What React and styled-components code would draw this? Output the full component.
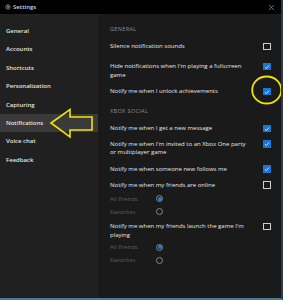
import React from 'react';
import styled, { createGlobalStyle } from 'styled-components';
import { Settings, X } from 'lucide-react';

const GlobalStyle = createGlobalStyle`
  html, body { margin: 0; padding: 0; background: #1a1a1a; }
  body { font-family: "Open Sans", "Noto Sans", sans-serif; -webkit-font-smoothing: antialiased; }
`;

const Window = styled.div`
  position: relative;
  width: 283px;
  height: 300px;
  box-sizing: border-box;
  display: flex;
  flex-direction: column;
  background: #1a1a1a;
  border-right: 2px solid #213d54;
  border-bottom: 2px solid #4d7891;
  overflow: hidden;
`;

const TitleBar = styled.div`
  height: 14px;
  flex: none;
  background: #000;
  display: flex;
  align-items: center;
  padding: 0 5px 0 5px;
  color: #d8d8d8;
  font-size: 6px;
  font-weight: 600;
  gap: 2px;
`;

const TitleText = styled.span`
  flex: 1;
  line-height: 14px;
`;

const Body = styled.div`
  flex: 1;
  display: flex;
  min-height: 0;
`;

const Sidebar = styled.nav`
  width: 98px;
  flex: none;
  background: #202020;
  padding-top: 8px;
  box-sizing: border-box;
`;

const NavItem = styled.div`
  height: 18.4px;
  line-height: 18.4px;
  padding-left: 6px;
  font-size: 6px;
  font-weight: 600;
  color: #e2e2e2;
  background: ${p => (p.$active ? '#3a3a3a' : 'transparent')};
`;

const Content = styled.main`
  flex: 1;
  padding: 11.25px 10px 0 12px;
  box-sizing: border-box;
`;

const SectionHeader = styled.div`
  font-size: 5.6px;
  letter-spacing: 0.3px;
  line-height: 8.5px;
  color: #8c8c8c;
  margin-bottom: 8.5px;
  margin-top: ${p => p.$mt || 0}px;
`;

const Row = styled.div`
  display: flex;
  justify-content: space-between;
  align-items: flex-start;
  margin-bottom: ${p => (p.$mb != null ? p.$mb : 7.5)}px;
`;

const Label = styled.div`
  width: 142px;
  font-size: 6px;
  line-height: 8.5px;
  color: #e6e6e6;
`;

const Box = styled.div`
  width: 7.5px;
  height: 7.5px;
  box-sizing: border-box;
  margin-top: 0.5px;
  margin-right: 0.5px;
  border: ${p => (p.$checked ? 'none' : '1px solid #cfcfcf')};
  background: ${p => (p.$checked ? '#1877d6' : 'transparent')};
  display: flex;
  align-items: center;
  justify-content: center;
`;

const RadioRow = styled.div`
  display: flex;
  align-items: center;
  height: 8.5px;
  margin-bottom: ${p => p.$mb || 4.5}px;
`;

const RadioLabel = styled.div`
  width: 46px;
  font-size: 6px;
  color: #5e5e5e;
`;

const Radio = styled.div`
  width: 7px;
  height: 7px;
  box-sizing: border-box;
  border-radius: 50%;
  border: 1px solid ${p => (p.$on ? '#8a8a8a' : '#8a8a8a')};
  display: flex;
  align-items: center;
  justify-content: center;
  &::after {
    content: '';
    width: 4px;
    height: 4px;
    border-radius: 50%;
    background: ${p => (p.$on ? '#1a7fe0' : 'transparent')};
  }
`;

const Overlay = styled.svg`
  position: absolute;
  left: 0;
  top: 0;
  pointer-events: none;
`;

const Check = ({ checked }) => (
  <Box $checked={checked}>
    {checked && (
      <svg width="6" height="6" viewBox="0 0 6 6">
        <path d="M1 3.2 L2.4 4.5 L5 1.6" fill="none" stroke="#fff" strokeWidth="0.8" />
      </svg>
    )}
  </Box>
);

const Setting = ({ text, checked, mb }) => (
  <Row $mb={mb}>
    <Label>{text}</Label>
    <Check checked={checked} />
  </Row>
);

const RadioItem = ({ text, on, mb }) => (
  <RadioRow $mb={mb}>
    <RadioLabel>{text}</RadioLabel>
    <Radio $on={on} />
  </RadioRow>
);

const navItems = ['General', 'Accounts', 'Shortcuts', 'Personalization', 'Capturing', 'Notifications', 'Voice chat', 'Feedback'];

export default function App() {
  return (
    <>
      <GlobalStyle />
      <Window>
        <TitleBar>
          <Settings size={6} color="#9a9a9a" strokeWidth={3} />
          <TitleText>Settings</TitleText>
          <X size={9} color="#bdbdbd" strokeWidth={1.5} />
        </TitleBar>
        <Body>
          <Sidebar>
            {navItems.map(n => (
              <NavItem key={n} $active={n === 'Notifications'}>{n}</NavItem>
            ))}
          </Sidebar>
          <Content>
            <SectionHeader>GENERAL</SectionHeader>
            <Setting text="Silence notification sounds" mb={11.5} />
            <Setting text="Hide notifications when I'm playing a fullscreen game" checked mb={8} />
            <Setting text="Notify me when I unlock achievements" checked mb={11.5} />
            <SectionHeader>XBOX SOCIAL</SectionHeader>
            <Setting text="Notify me when I get a new message" checked mb={7} />
            <Setting text="Notify me when I'm invited to an Xbox One party or multiplayer game" checked mb={8} />
            <Setting text="Notify me when someone new follows me" checked />
            <Setting text="Notify me when my friends are online" mb={5} />
            <RadioItem text="All friends" on />
            <RadioItem text="Favorites" mb={6.5} />
            <Setting text="Notify me when my friends launch the game I'm playing" mb={3.5} />
            <RadioItem text="All friends" on />
            <RadioItem text="Favorites" />
          </Content>
        </Body>
        <Overlay width="283" height="300" viewBox="0 0 283 300">
          <ellipse cx="266.7" cy="90" rx="14.5" ry="13.5" fill="none" stroke="#f0e500" strokeWidth="1.8" />
          <polygon
            points="51,123 70,109.5 70,117 92,117 92,130 70,130 70,137"
            fill="none"
            stroke="#f0e500"
            strokeWidth="1.6"
            strokeLinejoin="miter"
          />
        </Overlay>
      </Window>
    </>
  );
}
